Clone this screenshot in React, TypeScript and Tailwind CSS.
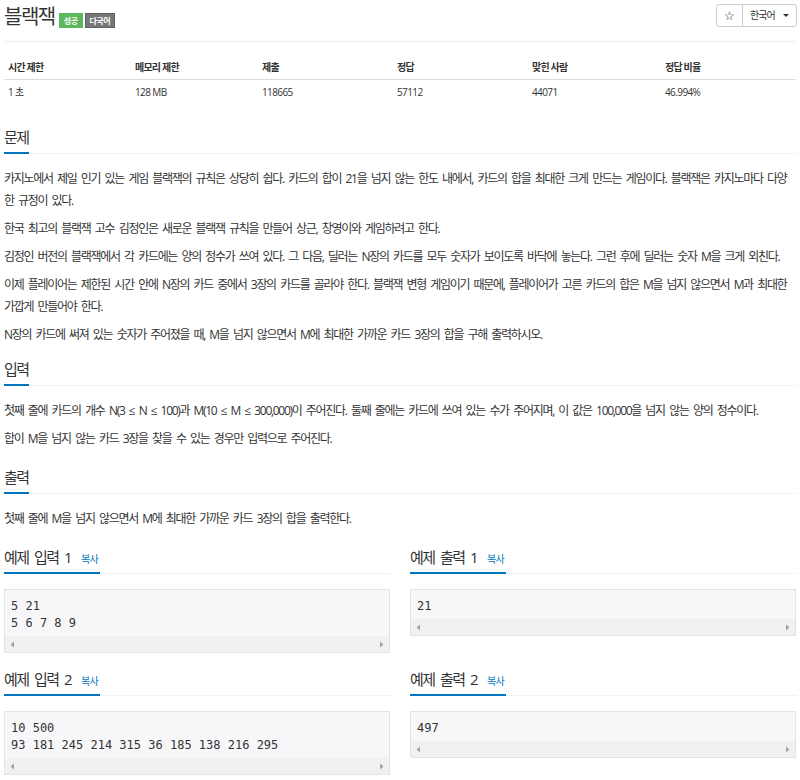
import React from "react";

function Headline({ children, link }: { children: React.ReactNode; link?: boolean }) {
  return (
    <div className="flex border-b border-dotted border-[#dfe4ea]">
      <h2 className="-mb-px flex h-[29px] items-baseline border-b-2 border-[#0076c0] pb-[3px] text-[15px] font-normal leading-[24px] tracking-[-1.5px] text-[#333] [word-spacing:3px]">
        <span className="leading-[24px]">{children}</span>
        {link && (
          <span className="ml-[10px] mr-[2px] text-[10px] leading-[10px] tracking-[-0.8px] text-[#0076c0] [word-spacing:0px]">복사</span>
        )}
      </h2>
    </div>
  );
}

function Para({ children }: { children: React.ReactNode }) {
  return (
    <p className="text-[12px] leading-[22px] tracking-[-1.3px] text-[#333] [word-spacing:2.5px]">
      {children}
    </p>
  );
}

function Arrow({ dir }: { dir: "l" | "r" }) {
  return (
    <svg width="5" height="7" viewBox="0 0 5 7">
      {dir === "l" ? (
        <path d="M4 0.5 L0.5 3.5 L4 6.5 Z" fill="#a3a3a3" />
      ) : (
        <path d="M1 0.5 L4.5 3.5 L1 6.5 Z" fill="#a3a3a3" />
      )}
    </svg>
  );
}

function SampleBox({ text }: { text: string }) {
  return (
    <div className="mt-[15px] border border-[#e3e3e8] bg-[#f7f7f9]">
      <pre className="overflow-hidden px-[6px] pb-[4px] pt-[8px] font-['DejaVu_Sans_Mono',monospace] text-[12px] leading-[17px] text-[#333]">
        {text}
      </pre>
      <div className="flex h-[16px] items-center justify-between bg-[#f1f1f1] px-[5px]">
        <Arrow dir="l" />
        <Arrow dir="r" />
      </div>
    </div>
  );
}

const cols = [
  ["시간 제한", "1 초"],
  ["메모리 제한", "128 MB"],
  ["제출", "118665"],
  ["정답", "57112"],
  ["맞힌 사람", "44071"],
  ["정답 비율", "46.994%"],
];

export default function App() {
  return (
    <div className="flex min-h-[780px] w-[800px] flex-col bg-white px-[4px] font-['Open_Sans','Noto_Sans_CJK_KR',sans-serif] text-[#333]">
      {/* Title bar */}
      <div className="flex h-[42px] shrink-0 items-start justify-between border-b border-[#eee]">
        <div className="flex items-start pt-[5px]">
          <h1 className="text-[20px] font-normal leading-[24px] tracking-[-1.5px] text-[#333]">블랙잭</h1>
          <div className="ml-[4px] mt-[8px] flex gap-[2px]">
            <span className="flex h-[15px] w-[24px] items-center justify-center bg-[#5cb85c] text-[8px] font-bold tracking-[-0.5px] text-white">
              성공
            </span>
            <span className="flex h-[15px] w-[30px] items-center justify-center border border-[#5e5e5e] bg-[#777] text-[8px] font-bold tracking-[-0.5px] text-white">
              다국어
            </span>
          </div>
        </div>
        <div className="mr-[-1px] mt-[4px] flex h-[23px]">
          <div className="flex w-[27px] items-center justify-center rounded-l-[3px] border border-[#ccc] bg-white font-['DejaVu_Sans',sans-serif] text-[12px] text-[#333]">
            ☆
          </div>
          <div className="-ml-px flex w-[55px] items-center justify-between rounded-r-[3px] border border-[#ccc] bg-white pl-[7px] pr-[7px]">
            <span className="text-[10px] tracking-[-1px] text-[#333]">한국어</span>
            <span className="h-0 w-0 border-x-[3px] border-t-[3px] border-x-transparent border-t-[#333]" />
          </div>
        </div>
      </div>

      {/* Info table */}
      <div className="mt-[13px] grid grid-cols-[127px_127px_135px_135px_133px_135px]">
        {cols.map(([h]) => (
          <div key={h} className="flex h-[25px] items-center border-b border-[#ddd] px-[4px] text-[10px] font-bold tracking-[-0.8px] text-[#333]">
            {h}
          </div>
        ))}
        {cols.map(([h, v]) => (
          <div key={h + "v"} className="flex h-[24px] items-center px-[4px] text-[10px] tracking-[-0.6px] text-[#333]">
            {v}
          </div>
        ))}
      </div>

      {/* 문제 */}
      <section className="mt-[21px] flex flex-col">
        <Headline>문제</Headline>
        <div className="mt-[14px] flex flex-col gap-[6px]">
          <Para>
            카지노에서 제일 인기 있는 게임 블랙잭의 규칙은 상당히 쉽다. 카드의 합이 21을 넘지 않는 한도 내에서, 카드의 합을 최대한 크게 만드는 게임이다. 블랙잭은 카지노마다 다양한 규정이 있다.
          </Para>
          <Para>한국 최고의 블랙잭 고수 김정인은 새로운 블랙잭 규칙을 만들어 상근, 창영이와 게임하려고 한다.</Para>
          <Para>
            김정인 버전의 블랙잭에서 각 카드에는 양의 정수가 쓰여 있다. 그 다음, 딜러는 N장의 카드를 모두 숫자가 보이도록 바닥에 놓는다. 그런 후에 딜러는 숫자 M을 크게 외친다.
          </Para>
          <Para>
            이제 플레이어는 제한된 시간 안에 N장의 카드 중에서 3장의 카드를 골라야 한다. 블랙잭 변형 게임이기 때문에, 플레이어가 고른 카드의 합은 M을 넘지 않으면서 M과 최대한 가깝게 만들어야 한다.
          </Para>
          <Para>N장의 카드에 써져 있는 숫자가 주어졌을 때, M을 넘지 않으면서 M에 최대한 가까운 카드 3장의 합을 구해 출력하시오.</Para>
        </div>
      </section>

      {/* 입력 */}
      <section className="mt-[11px] flex flex-col">
        <Headline>입력</Headline>
        <div className="mt-[14px] flex flex-col gap-[6px]">
          <Para>
            첫째 줄에 카드의 개수 N(3 ≤ N ≤ 100)과 M(10 ≤ M ≤ 300,000)이 주어진다. 둘째 줄에는 카드에 쓰여 있는 수가 주어지며, 이 값은 100,000을 넘지 않는 양의 정수이다.
          </Para>
          <Para>합이 M을 넘지 않는 카드 3장을 찾을 수 있는 경우만 입력으로 주어진다.</Para>
        </div>
      </section>

      {/* 출력 */}
      <section className="mt-[15px] flex flex-col">
        <Headline>출력</Headline>
        <div className="mt-[14px] flex flex-col gap-[6px]">
          <Para>첫째 줄에 M을 넘지 않으면서 M에 최대한 가까운 카드 3장의 합을 출력한다.</Para>
        </div>
      </section>

      {/* Samples */}
      <div className="mt-[15px] grid grid-cols-2 gap-x-[20px] gap-y-[14px]">
        <div className="flex flex-col">
          <Headline link>예제 입력 1</Headline>
          <SampleBox text={"5 21\n5 6 7 8 9"} />
        </div>
        <div className="flex flex-col">
          <Headline link>예제 출력 1</Headline>
          <SampleBox text={"21"} />
        </div>
        <div className="flex flex-col">
          <Headline link>예제 입력 2</Headline>
          <SampleBox text={"10 500\n93 181 245 214 315 36 185 138 216 295"} />
        </div>
        <div className="flex flex-col">
          <Headline link>예제 출력 2</Headline>
          <SampleBox text={"497"} />
        </div>
      </div>
    </div>
  );
}
